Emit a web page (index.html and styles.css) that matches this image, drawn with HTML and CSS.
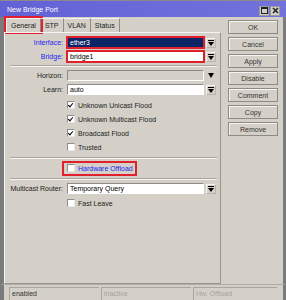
FILE: index.html
```html
<!DOCTYPE html>
<html lang="en">
<head>
    <meta charset="UTF-8">
    <title>New Bridge Port</title>
    <link rel="stylesheet" href="styles.css">
</head>
<body>
<div class="window">
    <div class="titlebar">
        <span class="title">New Bridge Port</span>
        <span class="winbtns">
            <span class="winbtn"><svg width="7" height="7" viewBox="0 0 7 7"><rect x="0.5" y="0.5" width="6" height="6" fill="none" stroke="#222"/><line x1="0" y1="1.5" x2="7" y2="1.5" stroke="#222"/></svg></span>
            <span class="winbtn"><svg width="7" height="7" viewBox="0 0 7 7"><path d="M1 1 L6 6 M6 1 L1 6" stroke="#222" stroke-width="1.6"/></svg></span>
        </span>
    </div>

    <div class="content">
        <div class="main">
            <div class="tabs">
                <span class="tab active marked">General</span>
                <span class="tab">STP</span>
                <span class="tab">VLAN</span>
                <span class="tab">Status</span>
            </div>
            <div class="panel">
                <div class="row">
                    <label class="lbl blue">Interface:</label>
                    <span class="field selected marked">ether3</span>
                    <span class="dd"><svg width="6" height="6" viewBox="0 0 6 6"><rect x="0" y="0" width="6" height="1" fill="#000"/><path d="M0 2 H6 L3 6 Z" fill="#000"/></svg></span>
                </div>
                <div class="row">
                    <label class="lbl blue">Bridge:</label>
                    <span class="field marked">bridge1</span>
                    <span class="dd"><svg width="6" height="6" viewBox="0 0 6 6"><rect x="0" y="0" width="6" height="1" fill="#000"/><path d="M0 2 H6 L3 6 Z" fill="#000"/></svg></span>
                </div>

                <div class="sep first"></div>

                <div class="row">
                    <label class="lbl">Horizon:</label>
                    <span class="field disabled"></span>
                    <span class="dd plain"><svg width="6" height="5" viewBox="0 0 6 5"><path d="M0 0 H6 L3 5 Z" fill="#000"/></svg></span>
                </div>
                <div class="row">
                    <label class="lbl">Learn:</label>
                    <span class="field">auto</span>
                    <span class="dd"><svg width="6" height="6" viewBox="0 0 6 6"><rect x="0" y="0" width="6" height="1" fill="#000"/><path d="M0 2 H6 L3 6 Z" fill="#000"/></svg></span>
                </div>

                <div class="check first-check"><span class="box on"></span>Unknown Unicast Flood</div>
                <div class="check"><span class="box on"></span>Unknown Multicast Flood</div>
                <div class="check"><span class="box on"></span>Broadcast Flood</div>
                <div class="check"><span class="box"></span>Trusted</div>

                <div class="sep"></div>
                <div class="check hw"><span class="hwmark"><span class="box"></span><span class="blue">Hardware Offload</span></span></div>
                <div class="sep"></div>

                <div class="row mr">
                    <label class="lbl">Multicast Router:</label>
                    <span class="field">Temporary Query</span>
                    <span class="dd"><svg width="6" height="6" viewBox="0 0 6 6"><rect x="0" y="0" width="6" height="1" fill="#000"/><path d="M0 2 H6 L3 6 Z" fill="#000"/></svg></span>
                </div>
                <div class="check"><span class="box"></span>Fast Leave</div>
            </div>
        </div>

        <div class="actions">
            <button class="btn">OK</button>
            <button class="btn">Cancel</button>
            <button class="btn">Apply</button>
            <button class="btn">Disable</button>
            <button class="btn">Comment</button>
            <button class="btn">Copy</button>
            <button class="btn">Remove</button>
        </div>
    </div>

    <div class="status">
        <span class="cell">enabled</span>
        <span class="cell dim">inactive</span>
        <span class="cell dim last">Hw. Offload</span>
    </div>
</div>
</body>
</html>
```

FILE: styles.css
```css
html, body {
    margin: 0;
    padding: 0;
}
body {
    width: 286px;
    height: 300px;
    overflow: hidden;
    background: #d4d0c8;
    font-family: "Liberation Sans", Arial, sans-serif;
    font-size: 7px;
    color: #222;
}
.window {
    box-sizing: border-box;
    width: 286px;
    height: 300px;
    display: flex;
    flex-direction: column;
    background: #d4d0c8;
    border-top: 1px solid #8a8a8a;
}
.titlebar {
    height: 16px;
    display: flex;
    align-items: center;
    justify-content: space-between;
    padding: 0 6px 0 7px;
    background: linear-gradient(to right, #6262d6, #7272dc);
    color: #fff;
}
.title {
    margin-top: 1px;
}
.winbtns {
    display: flex;
    gap: 1px;
    margin-top: 3px;
}
.winbtn {
    box-sizing: border-box;
    width: 10px;
    height: 10px;
    display: flex;
    align-items: center;
    justify-content: center;
    background: #d4d0c8;
    border: 1px solid #9a9a9a;
}
.content {
    flex: 1;
    display: flex;
    border-left: 4px solid #7b7b7b;
    border-right: 3px solid #7b7b7b;
    padding-top: 1px;
    min-height: 0;
}
.main {
    width: 217px;
    display: flex;
    flex-direction: column;
}
.tabs {
    height: 14px;
    display: flex;
    padding-left: 2px;
    align-items: stretch;
}
.tab {
    display: flex;
    align-items: center;
    padding: 0 4px;
    border-top: 1px solid #f4f4f4;
    border-right: 1px solid #8c8c8c;
    color: #222;
}
.tab:first-child {
    border-left: 1px solid #f4f4f4;
}
.marked {
    outline: 2px solid #e0202c;
    outline-offset: -1px;
}
.tab.marked {
    outline-offset: 0;
}
.panel {
    flex: 1;
    border-top: 1px solid #f4f4f4;
    border-left: 1px solid #f4f4f4;
    border-right: 1px solid #9a968e;
    border-bottom: 1px solid #9a968e;
    padding-top: 4px;
}
.row {
    display: flex;
    align-items: center;
    height: 11px;
    margin-bottom: 3px;
}
.lbl {
    width: 58px;
    text-align: right;
    padding-right: 4px;
    white-space: nowrap;
}
.blue {
    color: #2424f0;
}
.field {
    box-sizing: border-box;
    width: 137px;
    height: 11px;
    line-height: 9px;
    padding-left: 2px;
    background: #fff;
    color: #000;
    border-top: 1px solid #8c8c8c;
    border-left: 1px solid #8c8c8c;
    border-bottom: 1px solid #ffffff;
    border-right: 1px solid #ffffff;
}
.field.selected {
    background: #0a2466;
    color: #fff;
}
.field.disabled {
    background: #d4d0c8;
}
.dd {
    box-sizing: border-box;
    width: 10px;
    height: 10px;
    margin-left: 2px;
    display: flex;
    align-items: center;
    justify-content: center;
    border: 1px solid #b8b4ac;
    border-top-color: #f4f4f4;
    border-left-color: #f4f4f4;
}
.dd.plain {
    border: none;
}
.sep {
    height: 1px;
    margin: 3px 3px 2px 5px;
    background: #aaa69e;
    border-bottom: 1px solid #f4f4f4;
}
.sep.first {
    margin-top: 1px;
    margin-bottom: 3px;
}
.check {
    display: flex;
    align-items: center;
    height: 14px;
    padding-left: 62px;
}
.box {
    box-sizing: border-box;
    width: 8px;
    height: 8px;
    margin-right: 3px;
    background: #fff;
    border-top: 1px solid #8c8c8c;
    border-left: 1px solid #8c8c8c;
    border-bottom: 1px solid #e8e8e8;
    border-right: 1px solid #e8e8e8;
    position: relative;
}
.box.on::after {
    content: "";
    position: absolute;
    left: 1px;
    top: 0px;
    width: 2px;
    height: 4px;
    border-right: 1.5px solid #000;
    border-bottom: 1.5px solid #000;
    transform: rotate(40deg);
}
.hw {
    padding-left: 58px;
}
.hwmark {
    display: flex;
    align-items: center;
    height: 13px;
    padding: 0 3px 0 4px;
    outline: 2px solid #e0202c;
    outline-offset: -1px;
}
.row.mr {
    margin-top: 3px;
    margin-bottom: 2px;
}
.actions {
    margin-left: 7px;
    padding-top: 2px;
    display: flex;
    flex-direction: column;
    gap: 3px;
}
.btn {
    box-sizing: border-box;
    width: 50px;
    height: 14px;
    padding: 0;
    font-family: "Liberation Sans", Arial, sans-serif;
    font-size: 7px;
    color: #333;
    background: #d4d0c8;
    border: 1px solid #8e8a84;
    box-shadow: inset 1px 1px 0 #f4f4f4;
}
.status {
    height: 16px;
    display: flex;
    padding: 2px 6px 0 5px;
    border-left: 4px solid #7b7b7b;
    border-right: 3px solid #7b7b7b;
    border-top: 1px solid #b0aca4;
    box-sizing: border-box;
}
.cell {
    box-sizing: border-box;
    width: 90px;
    padding-left: 2px;
    line-height: 12px;
    border-top: 1px solid #aaa69e;
    border-left: 1px solid #aaa69e;
    margin-right: 2px;
    color: #333;
}
.cell.dim {
    color: #a8a49c;
}
.cell.last {
    margin-right: 0;
    flex: 1;
}
```
